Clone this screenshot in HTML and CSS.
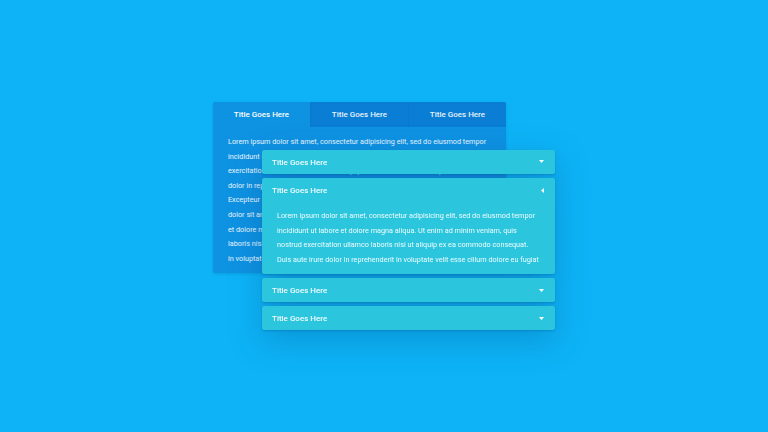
FILE: index.html
```html
<!DOCTYPE html>
<html>
<head>
<meta charset="utf-8">
<link rel="stylesheet" href="styles.css">
</head>
<body>
<div class="stage">
  <div class="tabs">
    <div class="tab-bar">
      <div class="tab active">Title Goes Here</div>
      <div class="tab">Title Goes Here</div>
      <div class="tab">Title Goes Here</div>
    </div>
    <div class="tab-body">
      <p class="line">Lorem ipsum dolor sit amet, consectetur adipisicing elit, sed do eiusmod tempor</p>
      <p class="line">incididunt ut labore et dolore magna aliqua. Ut enim ad minim veniam, quis nostrud</p>
      <p class="line">exercitation ullamco laboris nisi ut aliquip ex ea commodo consequat. Duis aute irure</p>
      <p class="line">dolor in reprehenderit in voluptate velit esse cillum dolore eu fugiat nulla pariatur.</p>
      <p class="line">Excepteur sint occaecat cupidatat non proident, sunt in culpa qui officia deserunt</p>
      <p class="line">dolor sit amet, consectetur adipisicing elit, sed do eiusmod tempor incididunt ut labore</p>
      <p class="line">et dolore magna aliqua. Ut enim ad minim veniam, quis nostrud exercitation ullamco</p>
      <p class="line">laboris nisi ut aliquip ex ea commodo consequat. Duis aute irure dolor in reprehenderit</p>
      <p class="line">in voluptate velit esse cillum dolore eu fugiat nulla pariatur.</p>
    </div>
  </div>
  <div class="accordion">
    <div class="item">
      <div class="head"><span>Title Goes Here</span><svg class="caret" viewBox="0 0 6 4" width="5" height="3.4"><path d="M0 0H6L3 3.6Z"/></svg></div>
    </div>
    <div class="item open">
      <div class="head"><span>Title Goes Here</span><svg class="caret" viewBox="0 0 4 6" width="3.4" height="5"><path d="M3.6 0V6L0 3Z"/></svg></div>
      <div class="content">
        <p class="line">Lorem ipsum dolor sit amet, consectetur adipisicing elit, sed do eiusmod tempor</p>
        <p class="line">incididunt ut labore et dolore magna aliqua. Ut enim ad minim veniam, quis</p>
        <p class="line">nostrud exercitation ullamco laboris nisi ut aliquip ex ea commodo consequat.</p>
        <p class="line">Duis aute irure dolor in reprehenderit in voluptate velit esse cillum dolore eu fugiat</p>
      </div>
    </div>
    <div class="item">
      <div class="head"><span>Title Goes Here</span><svg class="caret" viewBox="0 0 6 4" width="5" height="3.4"><path d="M0 0H6L3 3.6Z"/></svg></div>
    </div>
    <div class="item">
      <div class="head"><span>Title Goes Here</span><svg class="caret" viewBox="0 0 6 4" width="5" height="3.4"><path d="M0 0H6L3 3.6Z"/></svg></div>
    </div>
  </div>
</div>
</body>
</html>
```
FILE: styles.css
```css
html, body {
  margin: 0;
  padding: 0;
}
body {
  width: 768px;
  height: 432px;
  overflow: hidden;
  background: #0db3f6;
  font-family: Roboto, "Liberation Sans", sans-serif;
  color: #fff;
}
.stage {
  display: grid;
  padding: 102px 0 0 213px;
}
.tabs {
  grid-area: 1 / 1;
  width: 293px;
  height: 171px;
  background: #0e92e2;
  border-radius: 2px;
  overflow: hidden;
  box-shadow: 0 1px 3px rgba(0, 40, 100, 0.15);
}
.tab-bar {
  display: flex;
  height: 25px;
}
.tab {
  flex: 1;
  display: flex;
  align-items: center;
  justify-content: center;
  font-size: 8px;
  font-weight: 500;
  background: #0a7ed4;
  color: #e6f3fc;
}
.tab + .tab {
  border-left: 1px solid #0b78c9;
}
.tab.active {
  background: #0e92e2;
  color: #fff;
}
.line {
  margin: 0;
  white-space: nowrap;
}
.tab-body {
  padding: 8px 15px 0 15px;
  font-size: 7.25px;
  line-height: 14.6px;
  color: #eaf6fe;
  overflow: hidden;
}
.accordion {
  grid-area: 1 / 1;
  margin: 48px 0 0 49px;
  width: 293px;
  display: flex;
  flex-direction: column;
  gap: 4px;
  align-self: start;
  filter: drop-shadow(0 10px 16px rgba(0, 50, 110, 0.25));
}
.item {
  background: #2bc6dd;
  border-radius: 2px;
  box-shadow: 0 1px 2px rgba(0, 60, 120, 0.25);
}
.head {
  height: 24px;
  display: flex;
  align-items: center;
  justify-content: space-between;
  padding: 0 10px;
  font-size: 8px;
  font-weight: 500;
  color: #f4fcfe;
}
.caret {
  fill: #f4fcfe;
  margin-right: 1px;
}
.content {
  padding: 7px 15px 7px 15px;
  font-size: 7.25px;
  line-height: 14.6px;
  color: #eefbfd;
}
```
